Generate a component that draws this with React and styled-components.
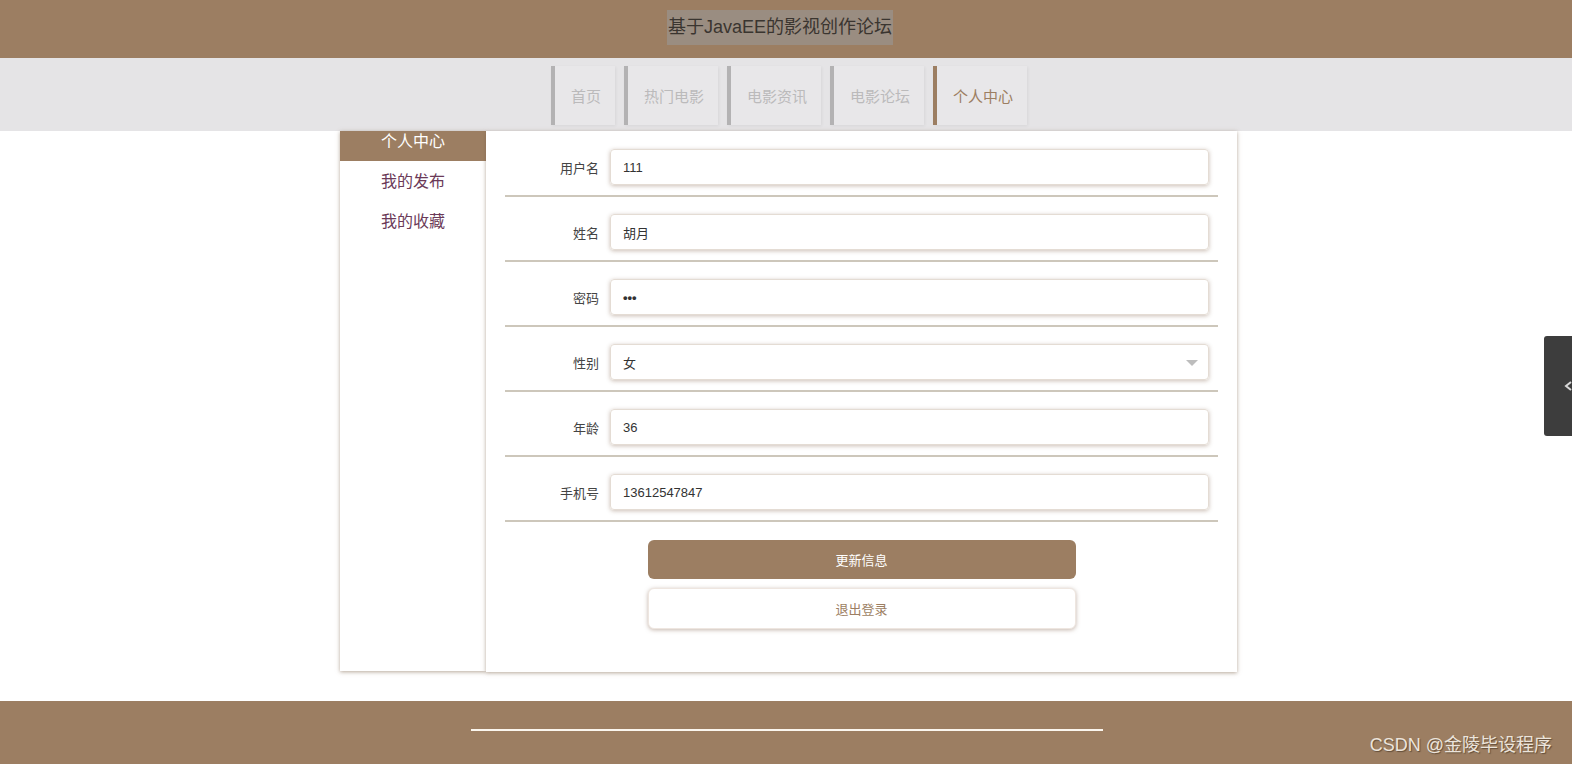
import React from "react";
import styled, { createGlobalStyle } from "styled-components";

const GlobalStyle = createGlobalStyle`
  * { box-sizing: border-box; }
  body {
    margin: 0;
    background: #fff;
    font-family: "Liberation Sans", "Noto Sans CJK SC", sans-serif;
    color: #333;
  }
`;

const Page = styled.div`
  position: relative;
  width: 100%;
  height: 764px;
  overflow: hidden;
  display: flex;
  flex-direction: column;
`;

const Header = styled.div`
  height: 58px;
  background: #9c7e62;
  display: flex;
  justify-content: center;
  padding-top: 10px;
`;

const SiteTitle = styled.h1`
  margin: 0 0 0 -12px;
  height: 35px;
  padding: 0 1px;
  background: #9a8d81;
  color: #3a3530;
  font-size: 18px;
  font-weight: 400;
  line-height: 35px;
`;

const Nav = styled.div`
  height: 73px;
  background: #e5e4e6;
  display: flex;
  justify-content: center;
  gap: 9px;
  padding: 8px 0 6px 6px;
`;

const NavItem = styled.div`
  display: flex;
  align-items: center;
  padding: 0 14px 0 16px;
  background: #e8e7e9;
  border-left: 4px solid ${(p) => (p.$active ? "#9c7e62" : "#b3b2b3")};
  box-shadow: 1px 1px 3px rgba(0, 0, 0, 0.06);
  color: ${(p) => (p.$active ? "#9c7e62" : "#bbbabb")};
  font-size: 15px;
`;

const Main = styled.div`
  display: flex;
  width: 902px;
  margin: 0 auto;
  padding-left: 5px;
  height: 541px;
`;

const Sidebar = styled.div`
  width: 146px;
  height: 540px;
  background: #fff;
  box-shadow: 0 1px 4px rgba(120, 95, 70, 0.55);
`;

const SideItem = styled.div`
  height: ${(p) => (p.$first ? "30px" : "40px")};
  line-height: ${(p) => (p.$first ? "22px" : "42px")};
  text-align: center;
  font-size: 16px;
  background: ${(p) => (p.$active ? "#9c7e62" : "transparent")};
  color: ${(p) => (p.$active ? "#fff" : "#6b3a58")};
`;

const Panel = styled.div`
  flex: 1;
  background: #fff;
  box-shadow: 0 1px 4px rgba(120, 95, 70, 0.55);
  padding: 1px 19px 0;
  display: flex;
  flex-direction: column;
`;

const Row = styled.div`
  display: flex;
  align-items: center;
  padding: 17px 9px 10px 0;
  border-bottom: 2px solid #cdc7bb;
`;

const Label = styled.label`
  width: 94px;
  text-align: right;
  font-size: 13px;
  color: #444;
  margin-right: 11px;
`;

const Field = styled.div`
  position: relative;
  flex: 1;
  height: 36px;
  border: 1px solid #e4dcd4;
  border-radius: 4px;
  box-shadow: 0 1px 4px rgba(140, 110, 90, 0.45);
  display: flex;
  align-items: center;
  padding: 0 12px;
  font-size: 13px;
  color: #333;
`;

const Caret = styled.span`
  position: absolute;
  right: 10px;
  top: 15px;
  border-left: 6px solid transparent;
  border-right: 6px solid transparent;
  border-top: 6px solid #bdbdbd;
`;

const Dots = styled.span`
  font-size: 13px;
  font-weight: 700;
`;

const Buttons = styled.div`
  display: flex;
  flex-direction: column;
  align-items: center;
  gap: 9px;
  margin-top: 18px;
`;

const Button = styled.div`
  width: 428px;
  height: ${(p) => (p.$primary ? "39px" : "41px")};
  border-radius: 6px;
  display: flex;
  align-items: center;
  justify-content: center;
  font-size: 13px;
  background: ${(p) => (p.$primary ? "#9c7e62" : "#fff")};
  color: ${(p) => (p.$primary ? "#fff" : "#9c7e62")};
  border: ${(p) => (p.$primary ? "none" : "1px solid #eee6e0")};
  box-shadow: ${(p) => (p.$primary ? "none" : "0 1px 4px rgba(140, 110, 90, 0.5)")};
`;

const Footer = styled.div`
  margin-top: auto;
  height: 63px;
  background: #9c7e62;
  display: flex;
  justify-content: center;
  padding-top: 28px;
`;

const FooterLine = styled.div`
  width: 632px;
  height: 2px;
  margin-left: 2px;
  background: #fbf6ee;
`;

const Watermark = styled.div`
  position: absolute;
  right: 20px;
  bottom: 8px;
  font-size: 18px;
  color: #ece4db;
  text-shadow: 1px 1px 1px rgba(60, 45, 30, 0.6);
`;

const SideTab = styled.div`
  position: absolute;
  right: 0;
  top: 336px;
  width: 28px;
  height: 100px;
  background: #3d3d3d;
  border-radius: 3px 0 0 3px;
  display: flex;
  align-items: center;
  justify-content: flex-end;
`;

const rows = [
  { label: "用户名", value: "111" },
  { label: "姓名", value: "胡月" },
  { label: "密码", value: "•••", password: true },
  { label: "性别", value: "女", select: true },
  { label: "年龄", value: "36" },
  { label: "手机号", value: "13612547847" },
];

const navs = ["首页", "热门电影", "电影资讯", "电影论坛", "个人中心"];

export default function App() {
  return (
    <Page>
      <GlobalStyle />
      <Header>
        <SiteTitle>基于JavaEE的影视创作论坛</SiteTitle>
      </Header>
      <Nav>
        {navs.map((n) => (
          <NavItem key={n} $active={n === "个人中心"}>
            {n}
          </NavItem>
        ))}
      </Nav>
      <Main>
        <Sidebar>
          <SideItem $first $active>
            个人中心
          </SideItem>
          <SideItem>我的发布</SideItem>
          <SideItem>我的收藏</SideItem>
        </Sidebar>
        <Panel>
          {rows.map((r) => (
            <Row key={r.label}>
              <Label>{r.label}</Label>
              <Field>
                {r.password ? <Dots>{r.value}</Dots> : r.value}
                {r.select && <Caret />}
              </Field>
            </Row>
          ))}
          <Buttons>
            <Button $primary>更新信息</Button>
            <Button>退出登录</Button>
          </Buttons>
        </Panel>
      </Main>
      <Footer>
        <FooterLine />
      </Footer>
      <Watermark>CSDN @金陵毕设程序</Watermark>
      <SideTab>
        <svg width="10" height="12" viewBox="0 0 10 12">
          <path d="M9 2 L4 6 L9 10" stroke="#d8d8d8" strokeWidth="2" fill="none" />
        </svg>
      </SideTab>
    </Page>
  );
}
